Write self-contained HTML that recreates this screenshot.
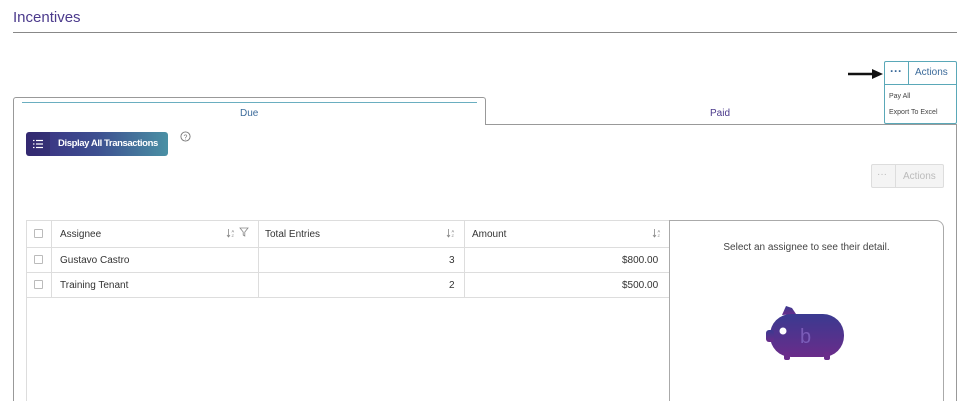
<!DOCTYPE html>
<html><head><style>
*{box-sizing:border-box;margin:0;padding:0}
body{width:969px;height:401px;overflow:hidden;background:#fff;font-family:"Liberation Sans",sans-serif;position:relative;color:#333}
.a{position:absolute}
.t{font-size:10px}
.s{position:absolute;font-size:8px;color:#888;letter-spacing:-1px}
</style></head><body>
<div class="a" style="left:13px;top:9px;font-size:15px;color:#4b3a8c">Incentives</div>
<div class="a" style="left:13px;top:32px;width:944px;height:1px;background:#888"></div>

<svg class="a" style="left:846px;top:68px" width="38" height="12"><line x1="2" y1="6" x2="28" y2="6" stroke="#111" stroke-width="2.5"/><polygon points="26,1 37,6 26,11" fill="#111"/></svg>
<div class="a" style="left:884px;top:61px;width:73px;height:63px;border:1px solid #5aa8b8;border-radius:2px;background:#fff"></div>
<div class="a" style="left:884px;top:84px;width:73px;height:1px;background:#5aa8b8"></div>
<div class="a" style="left:908px;top:61px;width:1px;height:23px;background:#5aa8b8"></div>
<div class="a" style="left:890px;top:64px;font-size:12px;font-weight:bold;color:#3b6a9a">···</div>
<div class="a" style="left:915px;top:67px;font-size:10px;color:#3b6a9a">Actions</div>
<div class="a" style="left:889px;top:93px;font-size:7px;color:#444">Pay All</div>
<div class="a" style="left:889px;top:109px;font-size:7px;color:#444">Export To Excel</div>

<div class="a" style="left:13px;top:97px;width:473px;height:28px;border:1px solid #999;border-bottom:none;border-radius:3px 3px 0 0"></div>
<div class="a" style="left:13px;top:124px;width:1px;height:277px;background:#999"></div>
<div class="a" style="left:485px;top:124px;width:472px;height:1px;background:#999"></div>
<div class="a" style="left:956px;top:124px;width:1px;height:277px;background:#999"></div>
<div class="a" style="left:22px;top:102px;width:455px;height:1px;background:#6aaec0"></div>
<div class="a" style="left:240px;top:108px;font-size:10px;color:#3b6a9a">Due</div>
<div class="a" style="left:710px;top:108px;font-size:10px;color:#4b3a8c">Paid</div>

<div class="a" style="left:26px;top:132px;width:142px;height:24px;border-radius:3px;background:linear-gradient(90deg,#3b2e80,#3d4f90 50%,#4a90a4)"></div>
<div class="a" style="left:26px;top:132px;width:24px;height:24px;border-radius:3px 0 0 3px;background:rgba(0,0,0,.12)"></div>
<svg class="a" style="left:32px;top:138px" width="12" height="12"><g stroke="#fff" stroke-width="1.2"><line x1="1" y1="2.5" x2="2.5" y2="2.5"/><line x1="4" y1="2.5" x2="11" y2="2.5"/><line x1="1" y1="6" x2="2.5" y2="6"/><line x1="4" y1="6" x2="11" y2="6"/><line x1="1" y1="9.5" x2="2.5" y2="9.5"/><line x1="4" y1="9.5" x2="11" y2="9.5"/></g></svg>
<div class="a" style="left:58px;top:138px;font-size:9.5px;font-weight:bold;color:#fff;letter-spacing:-0.4px;white-space:nowrap">Display All Transactions</div>
<svg class="a" style="left:180px;top:131px" width="11" height="11"><circle cx="5.5" cy="5.5" r="4.6" fill="none" stroke="#777" stroke-width=".9"/><text x="5.5" y="8.3" font-size="7" text-anchor="middle" fill="#777" font-family="Liberation Sans">?</text></svg>

<div class="a" style="left:871px;top:164px;width:73px;height:24px;border:1px solid #ddd;border-radius:2px;background:#f4f4f4"></div>
<div class="a" style="left:895px;top:164px;width:1px;height:24px;background:#ddd"></div>
<div class="a" style="left:877px;top:169px;font-size:10px;color:#bbb">···</div>
<div class="a" style="left:903px;top:171px;font-size:10px;color:#bbb">Actions</div>

<div class="a" style="left:26px;top:220px;width:644px;height:181px;border:1px solid #ddd;border-bottom:none"></div>
<div class="a" style="left:26px;top:247px;width:643px;height:1px;background:#ddd"></div>
<div class="a" style="left:26px;top:272px;width:643px;height:1px;background:#ddd"></div>
<div class="a" style="left:26px;top:297px;width:643px;height:1px;background:#ddd"></div>
<div class="a" style="left:51px;top:220px;width:1px;height:78px;background:#ddd"></div>
<div class="a" style="left:258px;top:220px;width:1px;height:78px;background:#ddd"></div>
<div class="a" style="left:464px;top:220px;width:1px;height:78px;background:#ddd"></div>
<div class="a" style="left:34px;top:229px;width:9px;height:9px;border:1px solid #bbb;border-radius:1px"></div>
<div class="a" style="left:34px;top:255px;width:9px;height:9px;border:1px solid #bbb;border-radius:1px"></div>
<div class="a" style="left:34px;top:280px;width:9px;height:9px;border:1px solid #bbb;border-radius:1px"></div>
<div class="a t" style="left:60px;top:229px">Assignee</div>
<div class="a t" style="left:265px;top:229px">Total Entries</div>
<div class="a t" style="left:472px;top:229px">Amount</div>
<svg class="a" style="left:226px;top:228px" width="10" height="10"><path d="M2.5 1V9M1 7L2.5 9L4 7" fill="none" stroke="#888" stroke-width=".8"/><text x="5.5" y="4.5" font-size="4" fill="#888" font-family="Liberation Sans">A</text><text x="5.5" y="9" font-size="4" fill="#888" font-family="Liberation Sans">Z</text></svg>
<svg class="a" style="left:239px;top:227px" width="10" height="10"><path d="M1 1H9L5.8 5V9L4.2 8V5Z" fill="none" stroke="#888" stroke-width=".8"/></svg>
<svg class="a" style="left:446px;top:228px" width="10" height="10"><path d="M2.5 1V9M1 7L2.5 9L4 7" fill="none" stroke="#888" stroke-width=".8"/><text x="5.5" y="4.5" font-size="4" fill="#888" font-family="Liberation Sans">A</text><text x="5.5" y="9" font-size="4" fill="#888" font-family="Liberation Sans">Z</text></svg>
<svg class="a" style="left:652px;top:228px" width="10" height="10"><path d="M2.5 1V9M1 7L2.5 9L4 7" fill="none" stroke="#888" stroke-width=".8"/><text x="5.5" y="4.5" font-size="4" fill="#888" font-family="Liberation Sans">A</text><text x="5.5" y="9" font-size="4" fill="#888" font-family="Liberation Sans">Z</text></svg>
<div class="a t" style="left:60px;top:255px">Gustavo Castro</div>
<div class="a t" style="left:449px;top:255px">3</div>
<div class="a t" style="left:622px;top:255px">$800.00</div>
<div class="a t" style="left:60px;top:280px">Training Tenant</div>
<div class="a t" style="left:449px;top:280px">2</div>
<div class="a t" style="left:622px;top:280px">$500.00</div>

<div class="a" style="left:669px;top:220px;width:275px;height:181px;border:1px solid #aaa;border-bottom:none;border-radius:0 8px 0 0"></div>
<div class="a t" style="left:669px;top:242px;width:275px;text-align:center;color:#444">Select an assignee to see their detail.</div>

<svg class="a" style="left:762px;top:302px" width="84" height="60">
<defs><linearGradient id="g" x1="0" y1="0" x2="0" y2="1"><stop offset="0" stop-color="#3a3a90"/><stop offset="1" stop-color="#6a2c8a"/></linearGradient></defs>
<path d="M20 13 L24 4 L30 6 L34 12 Z" fill="url(#g)"/>
<rect x="8" y="12" width="74" height="43" rx="21" fill="url(#g)"/>
<rect x="4" y="28" width="8" height="12" rx="3" fill="url(#g)"/>
<rect x="22" y="50" width="6" height="8" rx="2" fill="#6a2c8a"/>
<rect x="62" y="50" width="6" height="8" rx="2" fill="#6a2c8a"/>
<circle cx="21" cy="29" r="3.5" fill="#fff"/>
<text x="38" y="41" font-size="20" fill="#7a5cb8" font-family="Liberation Sans">b</text>
</svg>
</body></html>
